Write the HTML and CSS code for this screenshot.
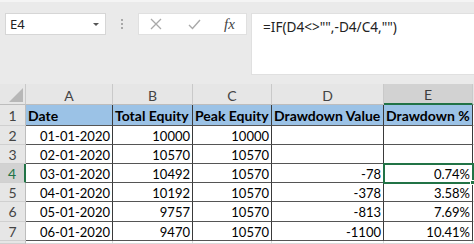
FILE: index.html
```html
<!DOCTYPE html>
<html>

<head>
    <title>Drawdown</title>
    <link rel="stylesheet" href="styles.css">
</head>

<body>
    <div class="bar">
        <div class="namebox"><span>E4</span><span class="caret"></span></div>
        <div class="grip"><i></i><i></i><i></i></div>
        <div class="tools">
            <svg width="12" height="12" viewBox="0 0 12 12"><path d="M1 1L11 11M11 1L1 11" stroke="#a9a9a9" stroke-width="1.3" fill="none"/></svg>
            <svg width="13" height="11" viewBox="0 0 13 11"><path d="M1 6L4.5 9.5L12 1" stroke="#a9a9a9" stroke-width="1.4" fill="none"/></svg>
            <span class="fx">fx</span>
        </div>
        <div class="formula">=IF(D4&lt;&gt;"",-D4/C4,"")</div>
    </div>

    <div class="sheet">
        <div class="hd corner"><span class="tri"></span></div>
        <div class="hd">A</div>
        <div class="hd">B</div>
        <div class="hd">C</div>
        <div class="hd">D</div>
        <div class="hd sel">E</div>
        <div class="hd end"></div>

        <div class="rh">1</div>
        <div class="c t head">Date</div>
        <div class="c t head">Total Equity</div>
        <div class="c t head">Peak Equity</div>
        <div class="c t head">Drawdown Value</div>
        <div class="c t head">Drawdown %</div>
        <div class="c"></div>

        <div class="rh">2</div>
        <div class="c t">01-01-2020</div>
        <div class="c t">10000</div>
        <div class="c t">10000</div>
        <div class="c t"></div>
        <div class="c t"></div>
        <div class="c"></div>

        <div class="rh">3</div>
        <div class="c t">02-01-2020</div>
        <div class="c t">10570</div>
        <div class="c t">10570</div>
        <div class="c t"></div>
        <div class="c t"></div>
        <div class="c"></div>

        <div class="rh sel">4</div>
        <div class="c t">03-01-2020</div>
        <div class="c t">10492</div>
        <div class="c t">10570</div>
        <div class="c t">-78</div>
        <div class="c t active">0.74%<span class="handle"></span></div>
        <div class="c"></div>

        <div class="rh">5</div>
        <div class="c t">04-01-2020</div>
        <div class="c t">10192</div>
        <div class="c t">10570</div>
        <div class="c t">-378</div>
        <div class="c t">3.58%</div>
        <div class="c"></div>

        <div class="rh">6</div>
        <div class="c t">05-01-2020</div>
        <div class="c t">9757</div>
        <div class="c t">10570</div>
        <div class="c t">-813</div>
        <div class="c t">7.69%</div>
        <div class="c"></div>

        <div class="rh">7</div>
        <div class="c t">06-01-2020</div>
        <div class="c t">9470</div>
        <div class="c t">10570</div>
        <div class="c t">-1100</div>
        <div class="c t">10.41%</div>
        <div class="c"></div>

        <div class="rh"></div>
        <div class="c"></div>
        <div class="c"></div>
        <div class="c"></div>
        <div class="c"></div>
        <div class="c"></div>
        <div class="c"></div>
    </div>
</body>

</html>
```

FILE: styles.css
```css
* { box-sizing: border-box; margin: 0; padding: 0; }
body { width: 474px; height: 244px; overflow: hidden; background: #fff; font-family: Lato, "Liberation Sans", sans-serif; }

.bar { height: 84px; background: #eaeaea; border-top: 2px solid #f4f4f4; display: flex; align-items: flex-start; padding: 11px 0 0 5px; }
.namebox { width: 101px; height: 22px; background: #fff; border: 1px solid #d6d6d6; display: flex; align-items: center; justify-content: space-between; padding: 0 6px 0 4px; font-family: "Noto Sans", sans-serif; font-size: 13px; color: #222; }
.caret { width: 0; height: 0; border-left: 3px solid transparent; border-right: 3px solid transparent; border-top: 3px solid #555; }
.grip { width: 32px; height: 22px; display: flex; flex-direction: column; align-items: center; justify-content: center; gap: 2px; }
.grip i { width: 2px; height: 2px; background: #a8a8a8; }
.tools { width: 109px; height: 22px; background: #fff; border: 1px solid #e0e0e0; display: flex; align-items: center; padding-left: 11px; }
.tools svg:nth-child(2) { margin-left: 26px; }
.fx { margin-left: 23px; font-family: "Liberation Serif", serif; font-style: italic; font-size: 15px; color: #444; }
.formula { flex: 1; margin-left: 4px; height: 62px; background: #fff; border: 1px solid #e0e0e0; border-right: none; padding: 3px 0 0 11px; font-family: "Noto Sans", sans-serif; font-size: 13.6px; color: #222; }

.sheet { display: grid; grid-template-columns: 26px 87px 80px 79px 112px 89px 1fr; grid-template-rows: 21px 21px 19px 19px 19px 19px 20px 19px 1fr; height: 160px; font-size: 13px; }
.hd { background: #e6e6e6; border-right: 1px solid #c9c9c9; border-bottom: 1px solid #bdbdbd; display: flex; align-items: center; justify-content: center; color: #444; font-size: 14px; padding-top: 2px; }
.hd.sel { background: #d2d2d2; border-bottom: 2px solid #217346; color: #3d3d3d; }
.hd.end { border-right: none; }
.corner { position: relative; background: #e6e6e6; }
.tri { position: absolute; right: 2px; bottom: 2px; width: 0; height: 0; border-left: 14px solid transparent; border-bottom: 14px solid #b7b7b7; }
.rh { background: #e6e6e6; border-right: 1px solid #bdbdbd; border-bottom: 1px solid #d0d0d0; display: flex; align-items: center; justify-content: center; color: #444; font-size: 14px; }
.rh.sel { background: #d2d2d2; border-right: 2px solid #217346; color: #217346; }

.c { border-right: 1px solid #dadada; border-bottom: 1px solid #dadada; display: flex; align-items: center; justify-content: flex-end; padding: 1px 2px 0 0; color: #000; white-space: nowrap; }
.c.t { border-right-color: #3a3a3a; border-bottom-color: #555; }
.c.head { background: #9bc2e6; font-weight: bold; font-size: 14px; justify-content: flex-start; padding-left: 2px; }
.active { position: relative; outline: 2px solid #217346; outline-offset: -1px; }
.handle { position: absolute; right: -3px; bottom: -3px; width: 5px; height: 5px; background: #217346; border: 1px solid #fff; }
```
